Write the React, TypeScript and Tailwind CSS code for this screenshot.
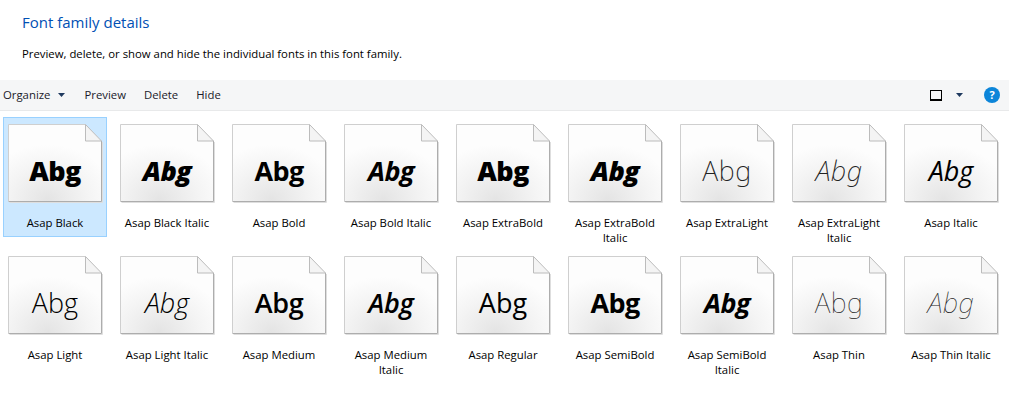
const heavy = "tracking-[-0.6px]"
const thin = "font-['Noto_Sans',sans-serif] tracking-[0.5px]"

const fonts = [
  { name: "Asap Black", cls: `font-black ${heavy}` },
  { name: "Asap Black Italic", cls: `font-black italic ${heavy}` },
  { name: "Asap Bold", cls: `font-bold ${heavy}` },
  { name: "Asap Bold Italic", cls: `font-bold italic ${heavy}` },
  { name: "Asap ExtraBold", cls: `font-extrabold ${heavy}` },
  { name: "Asap ExtraBold Italic", cls: `font-extrabold italic ${heavy}` },
  { name: "Asap ExtraLight", cls: `font-extralight text-[#222] ${thin}` },
  { name: "Asap ExtraLight Italic", cls: `font-extralight italic text-[#222] ${thin}` },
  { name: "Asap Italic", cls: "font-normal italic" },
  { name: "Asap Light", cls: "font-light" },
  { name: "Asap Light Italic", cls: "font-light italic" },
  { name: "Asap Medium", cls: "font-semibold tracking-[-0.3px]" },
  { name: "Asap Medium Italic", cls: "font-semibold italic tracking-[-0.3px]" },
  { name: "Asap Regular", cls: "font-normal" },
  { name: "Asap SemiBold", cls: `font-bold ${heavy}` },
  { name: "Asap SemiBold Italic", cls: `font-bold italic ${heavy}` },
  { name: "Asap Thin", cls: `font-thin text-[#222] ${thin}` },
  { name: "Asap Thin Italic", cls: `font-thin italic text-[#222] ${thin}` },
]

const PageIcon = () => (
  <svg width="96" height="80" viewBox="0 0 96 80" className="absolute left-0 top-0">
    <defs>
      <radialGradient id="pageFill" cx="0.42" cy="0.98" r="0.72">
        <stop offset="0" stopColor="#e4e4e4" />
        <stop offset="0.6" stopColor="#f4f4f4" />
        <stop offset="1" stopColor="#fdfdfd" />
      </radialGradient>
    </defs>
    <path d="M94.5 18V78.5H1.5" fill="none" stroke="#dedede" />
    <path d="M0.5 0.5H77.5L93.5 17V77.5H0.5Z" fill="url(#pageFill)" />
    <path d="M93.5 17V77.5H0.5" fill="none" stroke="#adadad" />
    <path d="M0.5 77.5V0.5H77.5" fill="none" stroke="#cfcfcf" />
    <path d="M77.5 0.5V17H93.5Z" fill="#f4f4f4" stroke="#bcbcbc" />
  </svg>
)

const Tile = ({ name, cls, selected }: { name: string; cls: string; selected?: boolean }) => (
  <div
    className={
      "flex h-[120px] w-[104px] flex-col items-center border pt-[6px] " +
      (selected ? "border-[#99d1ff] bg-[#cce8ff]" : "border-transparent")
    }
  >
    <div className="relative h-[78px] w-[94px] shrink-0">
      <PageIcon />
      <span
        className={
          "absolute inset-x-0 top-[29px] text-center text-[27px] leading-[36px] " +
          (cls.includes("text-[") ? "" : "text-black ") +
          cls
        }
      >
        Abg
      </span>
    </div>
    <span className="mt-[13px] w-[92px] text-center text-[11.35px] leading-[15px] text-black">{name}</span>
  </div>
)

const Caret = () => (
  <svg width="7" height="4" viewBox="0 0 7 4">
    <path d="M0 0H7L3.5 4Z" fill="#1f3a5f" />
  </svg>
)

export default function App() {
  return (
    <div className="h-[418px] w-[1009px] overflow-hidden bg-white font-['Open_Sans',sans-serif]">
      <div className="px-[22px] pt-[12px]">
        <h1 className="text-[15px] leading-[21px] font-normal text-[#0050b4]">Font family details</h1>
        <p className="mt-[13px] text-[11.35px] leading-[16px] text-black">
          Preview, delete, or show and hide the individual fonts in this font family.
        </p>
      </div>

      <div className="mt-[18px] flex h-[31px] items-center border-b border-[#e8e9ea] bg-[#f5f6f7] pl-[3px] pr-[9px] text-[11.35px] text-[#1a1a2a]">
        <span>Organize</span>
        <span className="ml-[8px] flex"><Caret /></span>
        <span className="ml-[19px]">Preview</span>
        <span className="ml-[18px]">Delete</span>
        <span className="ml-[18px]">Hide</span>
        <span className="ml-auto h-[11px] w-[12px] border border-b-2 border-black" />
        <span className="ml-[14px] flex"><Caret /></span>
        <span className="ml-[21px] flex h-[16px] w-[16px] items-center justify-center rounded-full bg-[#0c85d9] text-[11px] font-bold text-white">
          ?
        </span>
      </div>

      <div className="grid grid-cols-[repeat(9,112px)] auto-rows-[132px] pl-[3px] pt-[6px]">
        {fonts.map((font, index) => (
          <Tile {...font} selected={index === 0} key={font.name} />
        ))}
      </div>
    </div>
  )
}
